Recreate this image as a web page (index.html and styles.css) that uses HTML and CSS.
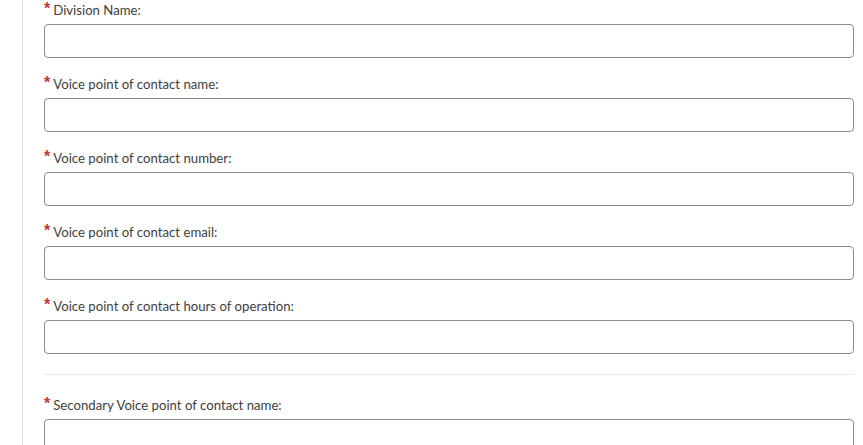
FILE: index.html
```html
<!DOCTYPE html>
<html>

<head>
  <meta charset="UTF-8">
  <meta name="viewport" content="width=device-width, initial-scale=1.0">
  <title>Division contacts</title>
  <link rel="stylesheet" href="styles.css">
</head>

<body>
  <div class="panel">
    <form class="form">
      <div class="field">
        <label for="division"><abbr class="req" title="required">*</abbr>Division Name:</label>
        <input id="division" type="text">
      </div>
      <div class="field">
        <label for="voice-name"><abbr class="req" title="required">*</abbr>Voice point of contact name:</label>
        <input id="voice-name" type="text">
      </div>
      <div class="field">
        <label for="voice-number"><abbr class="req" title="required">*</abbr>Voice point of contact number:</label>
        <input id="voice-number" type="text">
      </div>
      <div class="field">
        <label for="voice-email"><abbr class="req" title="required">*</abbr>Voice point of contact email:</label>
        <input id="voice-email" type="text">
      </div>
      <div class="field">
        <label for="voice-hours"><abbr class="req" title="required">*</abbr>Voice point of contact hours of operation:</label>
        <input id="voice-hours" type="text">
      </div>

      <hr class="divider">

      <div class="field">
        <label for="secondary-name"><abbr class="req" title="required">*</abbr>Secondary Voice point of contact name:</label>
        <input id="secondary-name" type="text">
      </div>
    </form>
  </div>
</body>

</html>
```

FILE: styles.css
```css
body {
  background: #fff;
  color: #3e3e3c;
  font-family: Lato, "Liberation Sans", sans-serif;
  font-size: 13.2px;
  height: 100vh;
  margin: 0;
  overflow: hidden;
}

.panel {
  border-left: 1px solid #dddbda;
  height: 100%;
  margin-left: 22px;
  padding: 1px 9px 0 21px;
}

.form {
  display: flex;
  flex-direction: column;
}

.field {
  display: flex;
  flex-direction: column;
  gap: 5px;
  margin-bottom: 17px;
}

label {
  display: flex;
  line-height: 18px;
}

.req {
  color: #c23934;
  font-family: "Liberation Sans", sans-serif;
  font-size: 16px;
  font-weight: bold;
  line-height: 14px;
  margin-right: 3px;
  padding-top: 1px;
  text-decoration: none;
}

input {
  border: 1px solid #8c8c8c;
  border-radius: 4px;
  box-sizing: border-box;
  font: inherit;
  height: 34px;
  margin: 0;
  padding: 0 12px;
  width: 100%;
}

.divider {
  border: 0;
  border-top: 1px solid #ecebea;
  margin: 3px 0 21px;
}
```
